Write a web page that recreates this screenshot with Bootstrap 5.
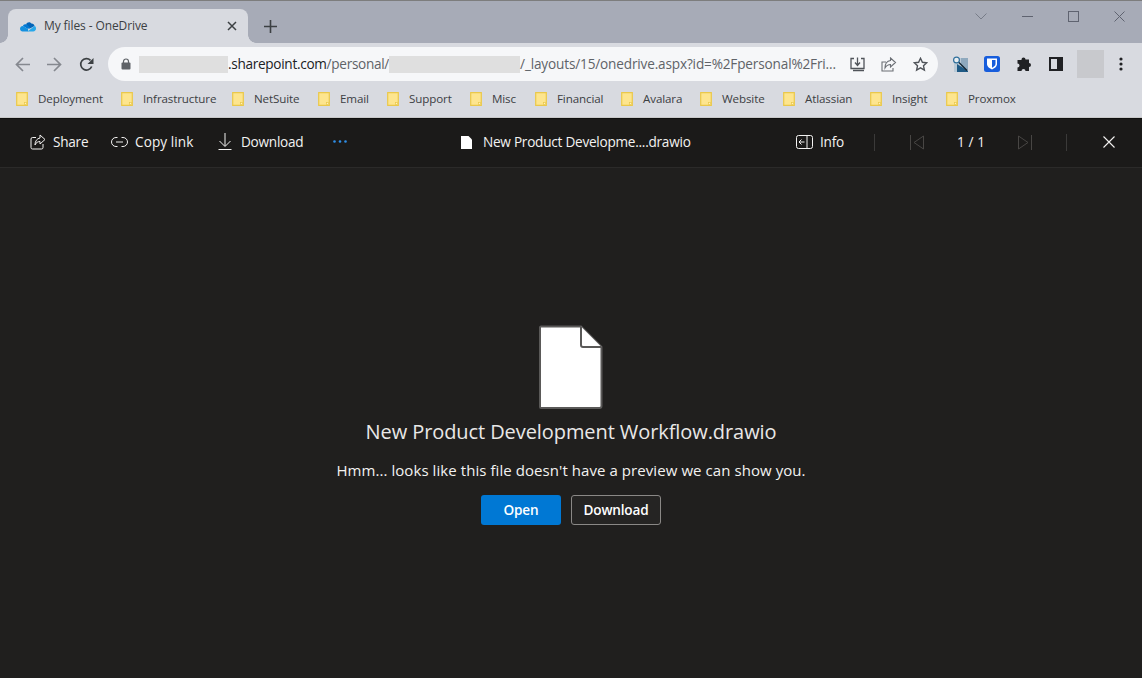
<!DOCTYPE html>
<html lang="en">
<head>
<meta charset="utf-8">
<title>My files - OneDrive</title>
<link href="https://cdn.jsdelivr.net/npm/bootstrap@5.3.0/dist/css/bootstrap.min.css" rel="stylesheet">
<style>
html,body{height:100%;margin:0;overflow:hidden}
body{background:#201f1e;font-family:"Open Sans","Noto Sans","Liberation Sans",sans-serif;display:flex;flex-direction:column;width:1142px;height:678px}
svg{display:block;flex:none}
.tabstrip{height:43px;background:#a7abb7;border-top:1px solid #7d7d7d;padding-left:8px;flex:none}
.tabshape{position:relative;width:240px;height:34px;margin-top:8px;background:#d8dae0;border-radius:8px 8px 0 0;padding:0 11px 0 12px;font-size:12px;color:#3c4043;letter-spacing:-.1px}
.tabshape::before,.tabshape::after{content:"";position:absolute;bottom:0;width:8px;height:8px}
.tabshape::before{left:-8px;background:radial-gradient(circle at 0 0,#a7abb7 7.5px,#d8dae0 8px)}
.tabshape::after{right:-8px;background:radial-gradient(circle at 100% 0,#a7abb7 7.5px,#d8dae0 8px)}
.tabico{margin-right:8px}
.newtab{margin-left:16px;margin-top:8px;height:34px}
.winbtns{margin-left:auto;margin-right:17px;width:150px;height:30px}
.chromebar{height:42px;background:#d8dae0;flex:none;padding-left:15px}
.navico{width:32px}
.navico.last{width:29px}
.addr{width:830px;height:34px;background:#f6f7f9;border-radius:17px;padding-left:13px;font-size:13.6px;color:#5f6368;letter-spacing:-.16px;white-space:nowrap}
.addr b{font-weight:400;color:#202124;letter-spacing:-.3px}
.addr .pth{letter-spacing:-.3px}
.lockico{margin-right:8px}
.blur{display:inline-block;height:17px;background:#dfdfdf}
.blur.one{width:89px}
.blur.two{width:131px}
.addrico{margin-left:auto;padding-right:10px;gap:16px}
.exts{padding-left:14px}
.exts>:nth-child(2){margin-left:15px}
.exts>:nth-child(3){margin-left:16px}
.exts>:nth-child(4){margin-left:18px}
.exts>:nth-child(5){margin-left:14px}
.exts>:nth-child(6){margin-left:15px}
.avatarbox{display:block;width:27px;height:28px;background:#c8c9cd}
.bookmarks{height:33px;background:#d8dae0;flex:none;padding-left:16px;padding-bottom:4px;font-size:11.6px;color:#3c4043;border-bottom:1px solid #c8c8c8;letter-spacing:-.12px}
.bm{display:flex;align-items:center;white-space:nowrap}
.bm svg{margin-right:10px}
.bm:nth-child(1){width:105px}.bm:nth-child(2){width:111px}.bm:nth-child(3){width:86px}.bm:nth-child(4){width:69px}
.bm:nth-child(5){width:83px}.bm:nth-child(6){width:65px}.bm:nth-child(7){width:86px}.bm:nth-child(8){width:79px}
.bm:nth-child(9){width:83px}.bm:nth-child(10){width:87px}.bm:nth-child(11){width:76px}
.viewbar{height:50px;background:#1b1a19;border-top:1px solid #0f0f0f;border-bottom:1px solid #2b2a29;flex:none;color:#f3f2f1;font-size:13.6px;letter-spacing:-.25px;position:relative;padding-bottom:2px}
.vitem{display:flex;align-items:center;white-space:nowrap}
.vleft{padding-left:30px}
.vitem.share{width:81px}
.vitem.copy{width:107px;letter-spacing:.08px}
.vitem.dl{width:115px}
.vitem svg{margin-right:7px}
.vitem.dl svg{margin-right:9px}
.sep{width:1px;height:17px;background:#3b3a39}
.vtitle{position:absolute;left:461px;top:0;height:calc(100% - 2px);display:flex;align-items:center;gap:11px}
.vright{position:absolute;left:796px;top:0;height:calc(100% - 2px);display:flex;align-items:center;white-space:nowrap}
.infoico{margin-right:7px}
.infotxt{width:25px}
.vright .sep.a{margin-left:29px}
.vright .prev{margin-left:35px}
.pager{margin-left:33px;width:27px;text-align:center;letter-spacing:.1px}
.vright .next{margin-left:34px}
.vright .sep.b{margin-left:34px}
.vright .closeico{margin-left:36px}
.stage{flex:1;text-align:center;color:#f3f2f1;padding-top:157px}
.fileico{margin:0 auto}
.fname{font-size:20px;line-height:28px;margin-top:8px;letter-spacing:-.08px;color:#e9e8e7}
.hmm{font-size:15px;line-height:20px;margin-top:14px;letter-spacing:.07px}
.btnbar{margin-top:15px;gap:10px}
.btn-open,.btn-dl{height:30px;font-size:13.6px;font-weight:600;border-radius:3px;padding:0;display:flex;align-items:center;justify-content:center;letter-spacing:-.2px;color:#fff}
.btn-open{width:80px;background:#0078d4;border:0}
.btn-dl{width:90px;background:#252423;border:1px solid #8a8886}
</style>
</head>
<body>
<div class="tabstrip d-flex align-items-start">
  <div class="tabshape d-flex align-items-center">
    <svg class="tabico" width="16" height="11" viewBox="0 0 16 11"><path d="M6 3.200C7 1.200 9.800.3 11.300 2.400c1.600-.2 3 .9 3.200 2.600l-5 2.800z" fill="#0364b8"/><path d="M5.900 3.300C4.600 2.800 3.200 3.500 3 5L8 8l2-1.400z" fill="#0078d4"/><path d="M3 5C1.300 4.900 0 6.200 0 7.700 0 9.300 1.200 10.400 2.600 10.400h5.600L8 7.900z" fill="#1490df"/><path d="M14.500 5c.9.3 1.500 1.200 1.500 2.500 0 1.600-1.200 2.900-2.800 2.900H7.500z" fill="#28a8ea"/></svg>
    <span>My files - OneDrive</span>
    <svg class="ms-auto" width="10" height="10" viewBox="0 0 10 10"><path d="M1 1l8 8M9 1l-8 8" stroke="#3c4043" stroke-width="1.500"/></svg>
  </div>
  <div class="newtab d-flex align-items-center"><svg width="13" height="13" viewBox="0 0 13 13"><path d="M6.500 0v13M0 6.500h13" stroke="#3c4043" stroke-width="1.600"/></svg></div>
  <div class="winbtns d-flex align-items-center justify-content-between">
    <svg width="12" height="7" viewBox="0 0 12 7"><path d="M.5.500l5.500 5.500L11.500.500" fill="none" stroke="#777c88"/></svg>
    <svg width="11" height="1" viewBox="0 0 11 1"><path d="M0 .5h11" stroke="#5f6370"/></svg>
    <svg width="11" height="11" viewBox="0 0 11 11"><rect x=".5" y=".5" width="10" height="10" fill="none" stroke="#5f6370"/></svg>
    <svg width="11" height="11" viewBox="0 0 11 11"><path d="M.5.500l10 10M10.500.500l-10 10" stroke="#5f6370"/></svg>
  </div>
</div>
<div class="chromebar d-flex align-items-center">
  <div class="navico"><svg width="15" height="15" viewBox="0 0 15 15"><path d="M15 7.500H2M8 1L1.500 7.500 8 14" fill="none" stroke="#85888f" stroke-width="1.700"/></svg></div>
  <div class="navico"><svg width="15" height="15" viewBox="0 0 15 15"><path d="M0 7.500h13M7 1l6.500 6.500L7 14" fill="none" stroke="#85888f" stroke-width="1.700"/></svg></div>
  <div class="navico last"><svg width="15" height="15" viewBox="0 0 15 15"><path d="M12.700 9.500A5.700 5.700 0 1 1 11.500 3.300" fill="none" stroke="#3c4043" stroke-width="1.700"/><path d="M14.500 1v6h-6z" fill="#3c4043"/></svg></div>
  <div class="addr d-flex align-items-center">
    <svg class="lockico" width="10" height="12" viewBox="0 0 10 12"><path d="M2.500 5V3.500a2.500 2.500 0 0 1 5 0V5" fill="none" stroke="#5f6368" stroke-width="1.200"/><rect x=".5" y="4.500" width="9" height="7" rx="1" fill="#5f6368"/></svg>
    <span class="blur one"></span><b>.sharepoint.com</b><span class="pth">/personal/</span><span class="blur two"></span><span>/_layouts/15/onedrive.aspx?id=%2Fpersonal%2Fri...</span>
    <div class="addrico d-flex align-items-center">
      <svg width="15" height="15" viewBox="0 0 15 15"><path d="M4 1.500H1v10h13v-10h-3M7.500 .5v7.500M5 5.500l2.500 3 2.500-3" fill="none" stroke="#50545a" stroke-width="1.300"/><path d="M3 13.500h11" stroke="#50545a" stroke-width="1.500"/></svg>
      <svg width="16" height="15" viewBox="0 0 16 15"><path d="M5 5H1v9h11v-3M9.500 1l5 4.500-5 4.500V7.500C7 7.500 5.500 8.500 4 11c0-4 2-7 5.500-7.500z" fill="none" stroke="#6b6f75" stroke-width="1.100"/></svg>
      <svg width="15" height="15" viewBox="0 0 15 15"><path d="M7.500 1.300l1.900 4 4.300.5-3.200 3 .9 4.300-3.900-2.200-3.900 2.200.9-4.300-3.200-3 4.300-.5z" fill="none" stroke="#50545a" stroke-width="1.400"/></svg>
    </div>
  </div>
  <div class="exts d-flex align-items-center">
    <svg width="17" height="16" viewBox="0 0 17 16"><rect x="2" y="2" width="14" height="14" fill="#b9c9d6"/><rect x="9" y="2" width="7" height="14" fill="#8fa9be"/><path d="M5 8l11 7v1H5z" fill="#1f5a85"/><circle cx="4.500" cy="4" r="3.500" fill="#2f6f9c"/><circle cx="4.500" cy="4" r="2.300" fill="#e8edf1"/><path d="M7 6.500l8 8" stroke="#10202e" stroke-width="1.300"/></svg>
    <svg width="16" height="16" viewBox="0 0 16 16"><rect width="16" height="16" rx="2.500" fill="#175ddc"/><path d="M3 2.500h10v5.500c0 2.700-2.800 4.500-5 5.500-2.200-1-5-2.800-5-5.500z" fill="#fff"/><path d="M8 4h3.500v4c0 1.600-1.700 2.800-3.500 3.700z" fill="#175ddc"/></svg>
    <svg width="15" height="15" viewBox="0 0 15 15"><path d="M5.500 2.500a2 2 0 0 1 4 0H13v3.500a2 2 0 0 1 0 4V14H9.500a2 2 0 0 0-4 0H1.500v-3.500a2 2 0 0 0 0-4V3h4z" fill="#202124"/></svg>
    <svg width="14" height="14" viewBox="0 0 14 14"><rect x="1" y="1" width="12" height="12" fill="none" stroke="#202124" stroke-width="2"/><rect x="8" y="1" width="5" height="12" fill="#202124"/></svg>
    <span class="avatarbox"></span>
    <svg width="4" height="14" viewBox="0 0 4 14"><circle cx="2" cy="2" r="1.600" fill="#202124"/><circle cx="2" cy="7" r="1.600" fill="#202124"/><circle cx="2" cy="12" r="1.600" fill="#202124"/></svg>
  </div>
</div>
<div class="bookmarks d-flex align-items-center">
  <span class="bm"><svg width="12" height="14" viewBox="0 0 12 14"><path d="M.7.700h10.600v12.600H.7z" fill="#fde58e" stroke="#eac84a" stroke-width="1.200"/><rect x="8.500" y="10.500" width="2" height="2" fill="#fff3c0" stroke="#eac84a" stroke-width=".7"/></svg>Deployment</span>
  <span class="bm"><svg width="12" height="14" viewBox="0 0 12 14"><path d="M.7.700h10.600v12.600H.7z" fill="#fde58e" stroke="#eac84a" stroke-width="1.200"/><rect x="8.500" y="10.500" width="2" height="2" fill="#fff3c0" stroke="#eac84a" stroke-width=".7"/></svg>Infrastructure</span>
  <span class="bm"><svg width="12" height="14" viewBox="0 0 12 14"><path d="M.7.700h10.600v12.600H.7z" fill="#fde58e" stroke="#eac84a" stroke-width="1.200"/><rect x="8.500" y="10.500" width="2" height="2" fill="#fff3c0" stroke="#eac84a" stroke-width=".7"/></svg>NetSuite</span>
  <span class="bm"><svg width="12" height="14" viewBox="0 0 12 14"><path d="M.7.700h10.600v12.600H.7z" fill="#fde58e" stroke="#eac84a" stroke-width="1.200"/><rect x="8.500" y="10.500" width="2" height="2" fill="#fff3c0" stroke="#eac84a" stroke-width=".7"/></svg>Email</span>
  <span class="bm"><svg width="12" height="14" viewBox="0 0 12 14"><path d="M.7.700h10.600v12.600H.7z" fill="#fde58e" stroke="#eac84a" stroke-width="1.200"/><rect x="8.500" y="10.500" width="2" height="2" fill="#fff3c0" stroke="#eac84a" stroke-width=".7"/></svg>Support</span>
  <span class="bm"><svg width="12" height="14" viewBox="0 0 12 14"><path d="M.7.700h10.600v12.600H.7z" fill="#fde58e" stroke="#eac84a" stroke-width="1.200"/><rect x="8.500" y="10.500" width="2" height="2" fill="#fff3c0" stroke="#eac84a" stroke-width=".7"/></svg>Misc</span>
  <span class="bm"><svg width="12" height="14" viewBox="0 0 12 14"><path d="M.7.700h10.600v12.600H.7z" fill="#fde58e" stroke="#eac84a" stroke-width="1.200"/><rect x="8.500" y="10.500" width="2" height="2" fill="#fff3c0" stroke="#eac84a" stroke-width=".7"/></svg>Financial</span>
  <span class="bm"><svg width="12" height="14" viewBox="0 0 12 14"><path d="M.7.700h10.600v12.600H.7z" fill="#fde58e" stroke="#eac84a" stroke-width="1.200"/><rect x="8.500" y="10.500" width="2" height="2" fill="#fff3c0" stroke="#eac84a" stroke-width=".7"/></svg>Avalara</span>
  <span class="bm"><svg width="12" height="14" viewBox="0 0 12 14"><path d="M.7.700h10.600v12.600H.7z" fill="#fde58e" stroke="#eac84a" stroke-width="1.200"/><rect x="8.500" y="10.500" width="2" height="2" fill="#fff3c0" stroke="#eac84a" stroke-width=".7"/></svg>Website</span>
  <span class="bm"><svg width="12" height="14" viewBox="0 0 12 14"><path d="M.7.700h10.600v12.600H.7z" fill="#fde58e" stroke="#eac84a" stroke-width="1.200"/><rect x="8.500" y="10.500" width="2" height="2" fill="#fff3c0" stroke="#eac84a" stroke-width=".7"/></svg>Atlassian</span>
  <span class="bm"><svg width="12" height="14" viewBox="0 0 12 14"><path d="M.7.700h10.600v12.600H.7z" fill="#fde58e" stroke="#eac84a" stroke-width="1.200"/><rect x="8.500" y="10.500" width="2" height="2" fill="#fff3c0" stroke="#eac84a" stroke-width=".7"/></svg>Insight</span>
  <span class="bm"><svg width="12" height="14" viewBox="0 0 12 14"><path d="M.7.700h10.600v12.600H.7z" fill="#fde58e" stroke="#eac84a" stroke-width="1.200"/><rect x="8.500" y="10.500" width="2" height="2" fill="#fff3c0" stroke="#eac84a" stroke-width=".7"/></svg>Proxmox</span>
</div>
<div class="viewbar d-flex align-items-center">
  <div class="vleft d-flex align-items-center">
    <span class="vitem share"><svg width="16" height="16" viewBox="0 0 16 16"><path d="M6 3.500H2.500a1.500 1.500 0 0 0-1.500 1.500v8.500a1.500 1.500 0 0 0 1.500 1.500h9a1.500 1.500 0 0 0 1.500-1.500V10" fill="none" stroke="#f3f2f1"/><path d="M10 1l5 4.500-5 4.500V7.500C8 7.500 6 8.500 5 11c0-4 2-6.500 5-7z" fill="none" stroke="#f3f2f1"/></svg>Share</span>
    <span class="vitem copy"><svg width="17" height="10" viewBox="0 0 17 10"><path d="M6.500.5H5a4.500 4.500 0 0 0 0 9h1.500M10.500.5H12a4.500 4.500 0 0 1 0 9h-1.500M5 5h7" fill="none" stroke="#f3f2f1"/></svg>Copy link</span>
    <span class="vitem dl"><svg width="14" height="17" viewBox="0 0 14 17"><path d="M7 0v13M1.500 8L7 13.500 12.500 8M.5 16.500h13" fill="none" stroke="#f3f2f1"/></svg>Download</span>
    <svg width="14" height="3" viewBox="0 0 14 3"><circle cx="1.500" cy="1.500" r="1.300" fill="#2f8fe8"/><circle cx="7" cy="1.500" r="1.300" fill="#2f8fe8"/><circle cx="12.500" cy="1.500" r="1.300" fill="#2f8fe8"/></svg>
  </div>
  <div class="vtitle">
    <svg width="11" height="13" viewBox="0 0 11 13"><path d="M0 0h7.500L11 3.500V13H0z" fill="#fff"/></svg>
    <span>New Product Developme....drawio</span>
  </div>
  <div class="vright">
    <svg class="infoico" width="17" height="14" viewBox="0 0 17 14"><rect x=".5" y=".5" width="16" height="13" rx="2" fill="none" stroke="#f3f2f1"/><path d="M11 .5v13M8.500 7H3.500M5.500 4.500L3 7l2.500 2.500" fill="none" stroke="#f3f2f1"/></svg>
    <span class="infotxt">Info</span>
    <span class="sep a"></span>
    <svg class="prev" width="14" height="15" viewBox="0 0 14 15"><path d="M.5 0v15M13.500 1L4 7.500 13.500 14z" fill="none" stroke="#484644"/></svg>
    <span class="pager">1 / 1</span>
    <svg class="next" width="14" height="15" viewBox="0 0 14 15"><path d="M13.500 0v15M.5 1L10 7.500.5 14z" fill="none" stroke="#484644"/></svg>
    <span class="sep b"></span>
    <svg class="closeico" width="12" height="12" viewBox="0 0 12 12"><path d="M.5.500l11 11M11.500.500l-11 11" stroke="#f3f2f1" stroke-width="1.100"/></svg>
  </div>
</div>
<div class="stage">
  <svg class="fileico" width="64" height="85" viewBox="0 0 64 85"><path d="M2 1.500h40L62.500 22v59a2 2 0 0 1-2 2H2a1 1 0 0 1-1-1V2.500a1 1 0 0 1 1-1z" fill="#fff" stroke="#5a5958" stroke-width="2"/><path d="M42 1.500V20a2 2 0 0 0 2 2h18.500" fill="#fff" stroke="#5a5958" stroke-width="2"/></svg>
  <div class="fname">New Product Development Workflow.drawio</div>
  <div class="hmm">Hmm... looks like this file doesn't have a preview we can show you.</div>
  <div class="btnbar d-flex justify-content-center">
    <button class="btn btn-open" type="button">Open</button>
    <button class="btn btn-dl" type="button">Download</button>
  </div>
</div>
<script src="https://cdn.jsdelivr.net/npm/bootstrap@5.3.0/dist/js/bootstrap.bundle.min.js"></script>
</body>
</html>
